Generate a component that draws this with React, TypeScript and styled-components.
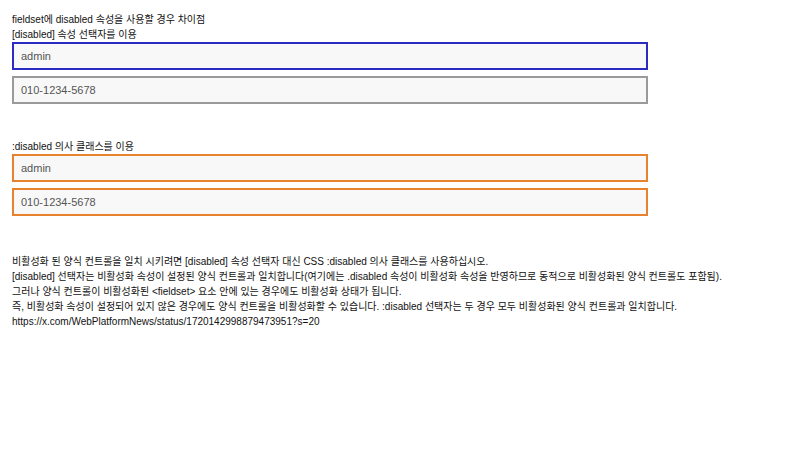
import React from 'react';
import styled, { createGlobalStyle } from 'styled-components';

const GlobalStyle = createGlobalStyle`
    body {
        margin: 0;
        background: #ffffff;
        font-family: "Liberation Sans", "Noto Sans CJK KR", sans-serif;
        font-size: 10px;
        line-height: 15px;
        color: #111;
    }
`;

const Page = styled.div`
    padding: 12px;
    width: 636px;
`;

const Line = styled.div`
    white-space: nowrap;
`;

const Fieldset = styled.fieldset`
    border: none;
    margin: 0;
    padding: 0;
    min-width: 0;
`;

const Section = styled.div<{ $gap: number }>`
    margin-top: ${(p) => p.$gap}px;
`;

const Field = styled.input<{ $border: string }>`
    display: block;
    box-sizing: border-box;
    width: 636px;
    height: 28px;
    margin: 0 0 6px 0;
    padding: 0 7px;
    font-family: "Liberation Sans", "Noto Sans CJK KR", sans-serif;
    font-size: 11px;
    color: #555;
    background: #f8f8f8;
    border: 2px solid ${(p) => p.$border};
    border-radius: 0;
    outline: none;
`;

const Notes = styled.div`
    margin-top: 32px;
`;

const App: React.FC = () => {
    return (
        <>
            <GlobalStyle />
            <Page>
                <Line>fieldset에 disabled 속성을 사용할 경우 차이점</Line>
                <Line>[disabled] 속성 선택자를 이용</Line>
                <Fieldset disabled>
                    <Field $border="#2b2bc4" type="text" defaultValue="admin" readOnly />
                    <Field $border="#9a9a9a" type="text" defaultValue="010-1234-5678" readOnly />
                </Fieldset>
                <Section $gap={29}>
                    <Line>:disabled 의사 클래스를 이용</Line>
                    <Fieldset disabled>
                        <Field $border="#e8822e" type="text" defaultValue="admin" readOnly />
                        <Field $border="#e8822e" type="text" defaultValue="010-1234-5678" readOnly />
                    </Fieldset>
                </Section>
                <Notes>
                    <Line>비활성화 된 양식 컨트롤을 일치 시키려면 [disabled] 속성 선택자 대신 CSS :disabled 의사 클래스를 사용하십시오.</Line>
                    <Line>[disabled] 선택자는 비활성화 속성이 설정된 양식 컨트롤과 일치합니다(여기에는 .disabled 속성이 비활성화 속성을 반영하므로 동적으로 비활성화된 양식 컨트롤도 포함됨).</Line>
                    <Line>그러나 양식 컨트롤이 비활성화된 &lt;fieldset&gt; 요소 안에 있는 경우에도 비활성화 상태가 됩니다.</Line>
                    <Line>즉, 비활성화 속성이 설정되어 있지 않은 경우에도 양식 컨트롤을 비활성화할 수 있습니다. :disabled 선택자는 두 경우 모두 비활성화된 양식 컨트롤과 일치합니다.</Line>
                    <Line>https://x.com/WebPlatformNews/status/1720142998879473951?s=20</Line>
                </Notes>
            </Page>
        </>
    );
};

export default App;
